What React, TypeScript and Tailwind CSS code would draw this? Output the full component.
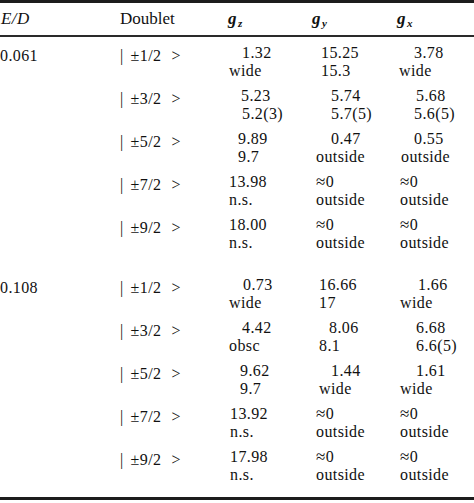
import React from "react";

type Line = [string, string];
type Row = {
  ed?: string;
  d: string;
  gz: Line[];
  gy: Line[];
  gx: Line[];
  gap?: boolean;
};

const rows: Row[] = [
  {
    ed: "0.061",
    d: "1/2",
    gz: [["1.32", "ml-[14px]"], ["wide", "ml-[1px]"]],
    gy: [["15.25", "ml-[9px]"], ["15.3", "ml-[9px]"]],
    gx: [["3.78", "ml-[17px]"], ["wide", "ml-[2px]"]],
  },
  {
    d: "3/2",
    gz: [["5.23", "ml-[13px]"], ["5.2(3)", "ml-[14px]"]],
    gy: [["5.74", "ml-[19px]"], ["5.7(5)", "ml-[19px]"]],
    gx: [["5.68", "ml-[19px]"], ["5.6(5)", "ml-[17px]"]],
  },
  {
    d: "5/2",
    gz: [["9.89", "ml-[10px]"], ["9.7", "ml-[10px]"]],
    gy: [["0.47", "ml-[19px]"], ["outside", "ml-[4px]"]],
    gx: [["0.55", "ml-[17px]"], ["outside", "ml-[4px]"]],
  },
  {
    d: "7/2",
    gz: [["13.98", "ml-[1px]"], ["n.s.", "ml-[1px]"]],
    gy: [["≈0", "ml-[4px]"], ["outside", "ml-[4px]"]],
    gx: [["≈0", "ml-[3px]"], ["outside", "ml-[3px]"]],
  },
  {
    d: "9/2",
    gz: [["18.00", "ml-[1px]"], ["n.s.", "ml-[1px]"]],
    gy: [["≈0", "ml-[4px]"], ["outside", "ml-[4px]"]],
    gx: [["≈0", "ml-[3px]"], ["outside", "ml-[3px]"]],
  },
  {
    ed: "0.108",
    d: "1/2",
    gap: true,
    gz: [["0.73", "ml-[15px]"], ["wide", "ml-[1px]"]],
    gy: [["16.66", "ml-[7px]"], ["17", "ml-[7px]"]],
    gx: [["1.66", "ml-[21px]"], ["wide", "ml-[3px]"]],
  },
  {
    d: "3/2",
    gz: [["4.42", "ml-[14px]"], ["obsc", "ml-[1px]"]],
    gy: [["8.06", "ml-[17px]"], ["8.1", "ml-[7px]"]],
    gx: [["6.68", "ml-[19px]"], ["6.6(5)", "ml-[19px]"]],
  },
  {
    d: "5/2",
    gz: [["9.62", "ml-[12px]"], ["9.7", "ml-[12px]"]],
    gy: [["1.44", "ml-[19px]"], ["wide", "ml-[7px]"]],
    gx: [["1.61", "ml-[19px]"], ["wide", "ml-[3px]"]],
  },
  {
    d: "7/2",
    gz: [["13.92", "ml-[2px]"], ["n.s.", "ml-[2px]"]],
    gy: [["≈0", "ml-[4px]"], ["outside", "ml-[4px]"]],
    gx: [["≈0", "ml-[3px]"], ["outside", "ml-[3px]"]],
  },
  {
    d: "9/2",
    gz: [["17.98", "ml-[2px]"], ["n.s.", "ml-[2px]"]],
    gy: [["≈0", "ml-[4px]"], ["outside", "ml-[4px]"]],
    gx: [["≈0", "ml-[3px]"], ["outside", "ml-[3px]"]],
  },
];

function Val({ t }: { t: string }) {
  if (t.startsWith("≈")) {
    return (
      <span>
        <span className="text-[17px]">≈</span>
        {t.slice(1)}
      </span>
    );
  }
  return <span>{t}</span>;
}

function Cell({ lines }: { lines: Line[] }) {
  return (
    <div className="flex flex-col">
      {lines.map(([t, c], i) => (
        <div key={i} className={"h-[18px] leading-[18px] whitespace-nowrap " + c}>
          <Val t={t} />
        </div>
      ))}
    </div>
  );
}

function G({ s }: { s: string }) {
  return (
    <span className="italic font-bold text-[17px]">
      g<span className="text-[11px] relative top-[3px] ml-[1px]">{s}</span>
    </span>
  );
}

export default function App() {
  return (
    <div
      className="w-[474px] h-[503px] bg-white text-[#111111] text-[16px] tracking-[0.4px] overflow-hidden"
      style={{ fontFamily: '"Liberation Serif", "Times New Roman", serif' }}
    >
      <div className="h-[3px] bg-[#1c1c1c]" />
      <div className="h-[32px] grid grid-cols-[120px_108px_84px_85px_77px] items-center">
        <div className="italic ml-[1px] text-[17px]">E/D</div>
        <div className="text-[17px] tracking-normal">Doublet</div>
        <div>
          <G s="z" />
        </div>
        <div>
          <G s="y" />
        </div>
        <div>
          <G s="x" />
        </div>
      </div>
      <div className="h-[2px] bg-[#2a2a2a]" />
      <div className="flex flex-col pt-[7px] gap-[7px]">
        {rows.map((r, i) => (
          <div
            key={i}
            className={
              "grid grid-cols-[120px_108px_84px_85px_77px] h-[36px] " +
              (r.gap ? "mt-[17px]" : "")
            }
          >
            <div className="h-[18px] leading-[18px] mt-[3px]">{r.ed ?? ""}</div>
            <div className="h-[18px] leading-[18px] mt-[3px] whitespace-nowrap flex">
              <span>|</span>
              <span className="ml-[7px]">±{r.d}</span>
              <span className="ml-[10px]">&gt;</span>
            </div>
            <Cell lines={r.gz} />
            <Cell lines={r.gy} />
            <Cell lines={r.gx} />
          </div>
        ))}
      </div>
      <div className="h-[3px] bg-[#1c1c1c] mt-[13px]" />
    </div>
  );
}
